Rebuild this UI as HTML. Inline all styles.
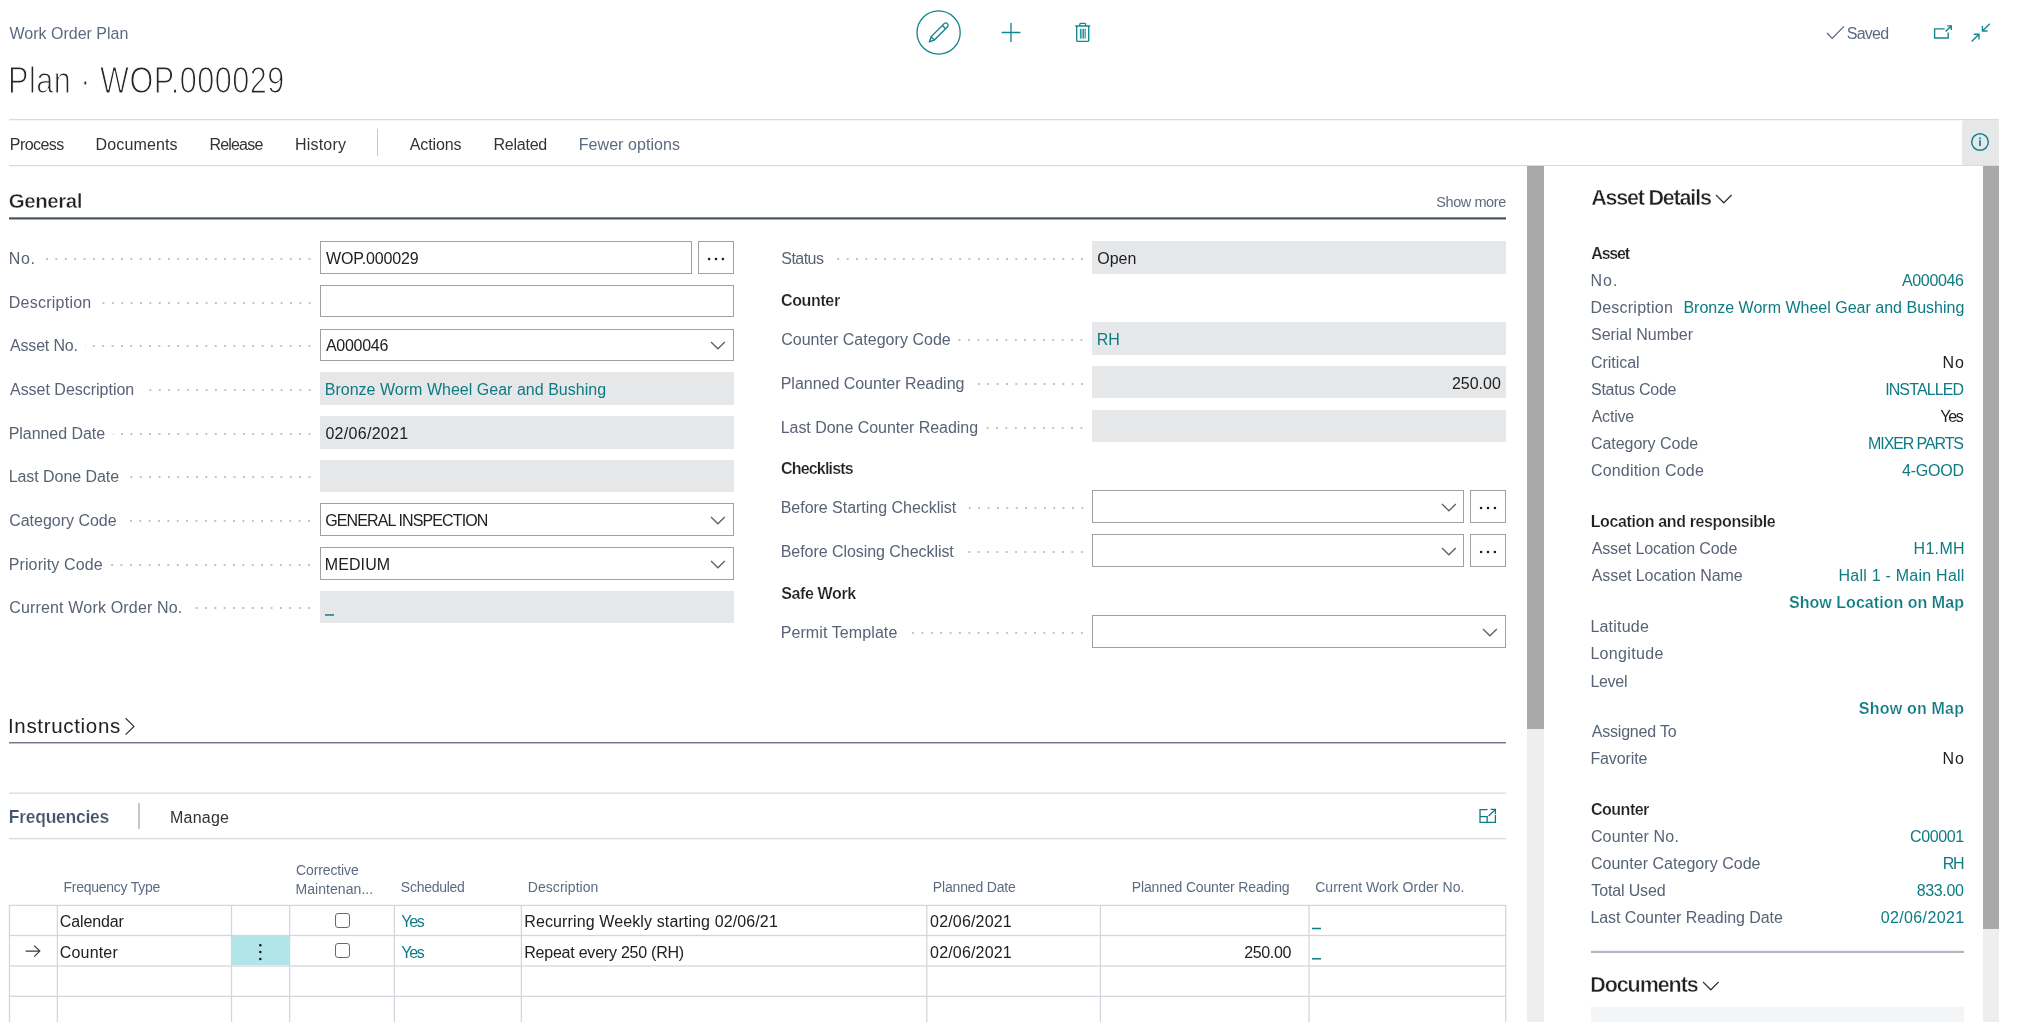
<!DOCTYPE html>
<html><head><meta charset="utf-8"><title>Work Order Plan</title><style>
html,body{margin:0;padding:0;background:#fff}
body{width:2025px;height:1022px;overflow:hidden;position:relative;font-family:"Liberation Sans",sans-serif}
.a{position:absolute}
#tx{position:absolute;left:0;top:0;width:2025px;height:1022px;will-change:transform}
.t{white-space:pre}
.ld{background-image:radial-gradient(circle at center,#bcc2cb 0,#bcc2cb 0.75px,rgba(188,194,203,0) 1.25px);background-size:9.375px 4px;background-position:right center;background-repeat:repeat-x}
</style></head><body>
<div class="a" style="left:9px;top:119px;width:1990px;height:1px;background:#d8dbdf;"></div>
<div class="a" style="left:9px;top:120px;width:1953px;height:1px;background:#f4f5f6;"></div>
<div class="a" style="left:9px;top:165px;width:1990px;height:1px;background:#d8dbdf;"></div>
<div class="a" style="left:9px;top:166px;width:1518px;height:1px;background:#f4f5f6;"></div>
<div class="a" style="left:377px;top:129px;width:1px;height:27px;background:#c3c9d2;"></div>
<div class="a" style="left:1962px;top:120px;width:37px;height:45px;background:#e6e7e9;border-radius:2px;"></div>
<div class="a" style="left:9px;top:217px;width:1497px;height:1px;background:#7e8898;"></div>
<div class="a" style="left:9px;top:218px;width:1497px;height:1px;background:#465065;"></div>
<div class="a" style="left:9px;top:219px;width:1497px;height:1px;background:#a4a9b8;"></div>
<div class="a ld" style="left:41.8px;top:256.85px;width:272.2px;height:4px"></div>
<div class="a" style="left:320px;top:241.2px;width:372px;height:32.6px;background:#fff;border:1px solid #a0a0a0;box-sizing:border-box;"></div>
<div class="a" style="left:698px;top:241.2px;width:36px;height:32.6px;background:#fff;border:1px solid #a0a0a0;box-sizing:border-box;"></div>
<svg class="a" style="left:706.2px;top:255.59999999999997px" width="20" height="6" viewBox="-10 -3 20 6"><circle cx="-6.9" cy="0" r="1.3" fill="#1a1a1a"/><circle cx="0" cy="0" r="1.3" fill="#1a1a1a"/><circle cx="6.9" cy="0" r="1.3" fill="#1a1a1a"/></svg>
<div class="a ld" style="left:98.6px;top:300.85px;width:215.4px;height:4px"></div>
<div class="a" style="left:320px;top:284.88px;width:414px;height:32.6px;background:#fff;border:1px solid #a0a0a0;box-sizing:border-box;"></div>
<div class="a ld" style="left:84.9px;top:343.85px;width:229.1px;height:4px"></div>
<div class="a" style="left:320px;top:328.56px;width:414px;height:32.6px;background:#fff;border:1px solid #a0a0a0;box-sizing:border-box;"></div>
<svg class="a" style="left:710.1px;top:341.46000000000004px" width="15.8" height="8.8" viewBox="-1 -1 15.8 8.8"><path d="M0 0 L6.9 6.8 L13.8 0" fill="none" stroke="#5f5f5f" stroke-width="1.3"/></svg>
<div class="a ld" style="left:141.6px;top:387.85px;width:172.4px;height:4px"></div>
<div class="a" style="left:320px;top:372.24px;width:414px;height:32.6px;background:#e6e7e9;"></div>
<div class="a ld" style="left:112.80887792848335px;top:431.85px;width:201.19112207151665px;height:4px"></div>
<div class="a" style="left:320px;top:415.91999999999996px;width:414px;height:32.6px;background:#e6e7e9;"></div>
<div class="a ld" style="left:126.78339498561448px;top:474.85px;width:187.21660501438552px;height:4px"></div>
<div class="a" style="left:320px;top:459.6px;width:414px;height:32.6px;background:#e6e7e9;"></div>
<div class="a ld" style="left:124.3173037402384px;top:518.8499999999999px;width:189.6826962597616px;height:4px"></div>
<div class="a" style="left:320px;top:503.28px;width:414px;height:32.6px;background:#fff;border:1px solid #a0a0a0;box-sizing:border-box;"></div>
<svg class="a" style="left:710.1px;top:516.18px" width="15.8" height="8.8" viewBox="-1 -1 15.8 8.8"><path d="M0 0 L6.9 6.8 L13.8 0" fill="none" stroke="#5f5f5f" stroke-width="1.3"/></svg>
<div class="a ld" style="left:110.34278668310728px;top:562.8499999999999px;width:203.65721331689272px;height:4px"></div>
<div class="a" style="left:320px;top:546.96px;width:414px;height:32.6px;background:#fff;border:1px solid #a0a0a0;box-sizing:border-box;"></div>
<svg class="a" style="left:710.1px;top:559.86px" width="15.8" height="8.8" viewBox="-1 -1 15.8 8.8"><path d="M0 0 L6.9 6.8 L13.8 0" fill="none" stroke="#5f5f5f" stroke-width="1.3"/></svg>
<div class="a ld" style="left:189.2577065351418px;top:605.8499999999999px;width:124.7422934648582px;height:4px"></div>
<div class="a" style="left:320px;top:590.64px;width:414px;height:32.6px;background:#e6e7e9;"></div>
<div class="a" style="left:325px;top:614px;width:9px;height:1px;background:rgba(13,123,131,0.81);"></div>
<div class="a" style="left:325px;top:615px;width:9px;height:1px;background:rgba(13,123,131,0.69);"></div>
<div class="a ld" style="left:831.8px;top:256.85px;width:254.70000000000005px;height:4px"></div>
<div class="a" style="left:1092px;top:241.0px;width:414px;height:32.6px;background:#e6e7e9;"></div>
<div class="a ld" style="left:958.4px;top:337.85px;width:128.10000000000002px;height:4px"></div>
<div class="a" style="left:1092px;top:322.3px;width:414px;height:32.6px;background:#e6e7e9;"></div>
<div class="a ld" style="left:971.8px;top:381.85px;width:114.70000000000005px;height:4px"></div>
<div class="a" style="left:1092px;top:365.9px;width:414px;height:32.6px;background:#e6e7e9;"></div>
<div class="a ld" style="left:985.4px;top:425.85px;width:101.10000000000002px;height:4px"></div>
<div class="a" style="left:1092px;top:409.5px;width:414px;height:32.6px;background:#e6e7e9;"></div>
<div class="a ld" style="left:964.5px;top:505.84999999999997px;width:122.0px;height:4px"></div>
<div class="a" style="left:1092px;top:490.3px;width:372px;height:32.6px;background:#fff;border:1px solid #a0a0a0;box-sizing:border-box;"></div>
<svg class="a" style="left:1441.1999999999998px;top:503.00000000000006px" width="15.8" height="8.8" viewBox="-1 -1 15.8 8.8"><path d="M0 0 L6.9 6.8 L13.8 0" fill="none" stroke="#5f5f5f" stroke-width="1.3"/></svg>
<div class="a" style="left:1470px;top:490.3px;width:36px;height:32.6px;background:#fff;border:1px solid #a0a0a0;box-sizing:border-box;"></div>
<svg class="a" style="left:1478.2px;top:504.7px" width="20" height="6" viewBox="-10 -3 20 6"><circle cx="-6.9" cy="0" r="1.3" fill="#1a1a1a"/><circle cx="0" cy="0" r="1.3" fill="#1a1a1a"/><circle cx="6.9" cy="0" r="1.3" fill="#1a1a1a"/></svg>
<div class="a ld" style="left:962.1px;top:549.8499999999999px;width:124.39999999999998px;height:4px"></div>
<div class="a" style="left:1092px;top:534.1px;width:372px;height:32.6px;background:#fff;border:1px solid #a0a0a0;box-sizing:border-box;"></div>
<svg class="a" style="left:1441.1999999999998px;top:546.8000000000001px" width="15.8" height="8.8" viewBox="-1 -1 15.8 8.8"><path d="M0 0 L6.9 6.8 L13.8 0" fill="none" stroke="#5f5f5f" stroke-width="1.3"/></svg>
<div class="a" style="left:1470px;top:534.1px;width:36px;height:32.6px;background:#fff;border:1px solid #a0a0a0;box-sizing:border-box;"></div>
<svg class="a" style="left:1478.2px;top:548.5px" width="20" height="6" viewBox="-10 -3 20 6"><circle cx="-6.9" cy="0" r="1.3" fill="#1a1a1a"/><circle cx="0" cy="0" r="1.3" fill="#1a1a1a"/><circle cx="6.9" cy="0" r="1.3" fill="#1a1a1a"/></svg>
<div class="a ld" style="left:905px;top:630.8499999999999px;width:181.5px;height:4px"></div>
<div class="a" style="left:1092px;top:615.4px;width:414px;height:32.6px;background:#fff;border:1px solid #a0a0a0;box-sizing:border-box;"></div>
<svg class="a" style="left:1482.1px;top:628.3px" width="15.8" height="8.8" viewBox="-1 -1 15.8 8.8"><path d="M0 0 L6.9 6.8 L13.8 0" fill="none" stroke="#5f5f5f" stroke-width="1.3"/></svg>
<svg class="a" style="left:124px;top:717px" width="12" height="19" viewBox="0 0 12 19"><path d="M1.6 1.2 L10 9.4 L1.6 17.6" fill="none" stroke="#333" stroke-width="1.2"/></svg>
<div class="a" style="left:9px;top:742px;width:1497px;height:1px;background:#717b8d;"></div>
<div class="a" style="left:9px;top:743px;width:1497px;height:1px;background:#bcc1cb;"></div>
<div class="a" style="left:9px;top:792px;width:1497px;height:1px;background:#ecedf0;"></div>
<div class="a" style="left:9px;top:793px;width:1497px;height:1px;background:#e0e2e6;"></div>
<div class="a" style="left:9px;top:838px;width:1497px;height:1px;background:#d7dade;"></div>
<div class="a" style="left:9px;top:839px;width:1497px;height:1px;background:#f3f4f6;"></div>
<div class="a" style="left:138.3px;top:802.7px;width:1.3px;height:26px;background:#c3c9d2;"></div>
<svg class="a" style="left:1478px;top:807px" width="20" height="18" viewBox="1478 807 20 18" fill="none" stroke="#0d7b83" stroke-width="1.3"><path d="M1487.5 809.6 H1480 V822.4 H1495.4 V815"/><path d="M1480 816.6 H1487.2 V822.4"/><path d="M1488.6 816 L1495.4 809.4 M1490.6 809.4 H1495.4 V814.2"/></svg>
<div class="a" style="left:9px;top:904px;width:1497.2px;height:1px;background:rgba(210,213,219,0.23);"></div>
<div class="a" style="left:9px;top:905px;width:1497.2px;height:1px;background:rgba(210,213,219,1.00);"></div>
<div class="a" style="left:9px;top:934px;width:1497.2px;height:1px;background:rgba(210,213,219,0.12);"></div>
<div class="a" style="left:9px;top:935px;width:1497.2px;height:1px;background:rgba(210,213,219,1.00);"></div>
<div class="a" style="left:9px;top:936px;width:1497.2px;height:1px;background:rgba(210,213,219,0.12);"></div>
<div class="a" style="left:9px;top:965px;width:1497.2px;height:1px;background:rgba(210,213,219,0.62);"></div>
<div class="a" style="left:9px;top:966px;width:1497.2px;height:1px;background:rgba(210,213,219,0.62);"></div>
<div class="a" style="left:9px;top:995px;width:1497.2px;height:1px;background:rgba(210,213,219,0.33);"></div>
<div class="a" style="left:9px;top:996px;width:1497.2px;height:1px;background:rgba(210,213,219,0.92);"></div>
<div class="a" style="left:8px;top:905px;width:1px;height:117px;background:rgba(210,213,219,0.12);"></div>
<div class="a" style="left:9px;top:905px;width:1px;height:117px;background:rgba(210,213,219,1.00);"></div>
<div class="a" style="left:10px;top:905px;width:1px;height:117px;background:rgba(210,213,219,0.12);"></div>
<div class="a" style="left:56px;top:905px;width:1px;height:117px;background:rgba(210,213,219,0.23);"></div>
<div class="a" style="left:57px;top:905px;width:1px;height:117px;background:rgba(210,213,219,1.00);"></div>
<div class="a" style="left:230px;top:905px;width:1px;height:117px;background:rgba(210,213,219,0.12);"></div>
<div class="a" style="left:231px;top:905px;width:1px;height:117px;background:rgba(210,213,219,1.00);"></div>
<div class="a" style="left:232px;top:905px;width:1px;height:117px;background:rgba(210,213,219,0.12);"></div>
<div class="a" style="left:289px;top:905px;width:1px;height:117px;background:rgba(210,213,219,1.00);"></div>
<div class="a" style="left:290px;top:905px;width:1px;height:117px;background:rgba(210,213,219,0.23);"></div>
<div class="a" style="left:393px;top:905px;width:1px;height:117px;background:rgba(210,213,219,0.23);"></div>
<div class="a" style="left:394px;top:905px;width:1px;height:117px;background:rgba(210,213,219,1.00);"></div>
<div class="a" style="left:520px;top:905px;width:1px;height:117px;background:rgba(210,213,219,0.23);"></div>
<div class="a" style="left:521px;top:905px;width:1px;height:117px;background:rgba(210,213,219,1.00);"></div>
<div class="a" style="left:926px;top:905px;width:1px;height:117px;background:rgba(210,213,219,0.83);"></div>
<div class="a" style="left:927px;top:905px;width:1px;height:117px;background:rgba(210,213,219,0.42);"></div>
<div class="a" style="left:1099px;top:905px;width:1px;height:117px;background:rgba(210,213,219,0.22);"></div>
<div class="a" style="left:1100px;top:905px;width:1px;height:117px;background:rgba(210,213,219,1.00);"></div>
<div class="a" style="left:1308px;top:905px;width:1px;height:117px;background:rgba(210,213,219,0.62);"></div>
<div class="a" style="left:1309px;top:905px;width:1px;height:117px;background:rgba(210,213,219,0.62);"></div>
<div class="a" style="left:1505px;top:905px;width:1px;height:117px;background:rgba(210,213,219,0.92);"></div>
<div class="a" style="left:1506px;top:905px;width:1px;height:117px;background:rgba(210,213,219,0.33);"></div>
<div class="a" style="left:232.2px;top:936.3px;width:56.8px;height:29.1px;background:#b1e5ea;"></div>
<svg class="a" style="left:257px;top:942px" width="7" height="20" viewBox="257 942 7 20"><circle cx="260.3" cy="945.2" r="1.25" fill="#1a1a1a"/><circle cx="260.3" cy="952.1" r="1.25" fill="#1a1a1a"/><circle cx="260.3" cy="958.9" r="1.25" fill="#1a1a1a"/></svg>
<div class="a" style="left:1312px;top:927px;width:9px;height:1px;background:rgba(13,123,131,0.25);"></div>
<div class="a" style="left:1312px;top:928px;width:9px;height:1px;background:rgba(13,123,131,1.00);"></div>
<div class="a" style="left:1312px;top:929px;width:9px;height:1px;background:rgba(13,123,131,0.25);"></div>
<div class="a" style="left:1312px;top:958px;width:9px;height:1px;background:rgba(13,123,131,0.95);"></div>
<div class="a" style="left:1312px;top:959px;width:9px;height:1px;background:rgba(13,123,131,0.55);"></div>
<div class="a" style="left:334.8px;top:913.2px;width:15.2px;height:14.8px;background:#fff;border:1px solid #6a6a6a;box-sizing:border-box;border-radius:3px;"></div>
<div class="a" style="left:334.8px;top:943.3px;width:15.2px;height:14.8px;background:#fff;border:1px solid #6a6a6a;box-sizing:border-box;border-radius:3px;"></div>
<svg class="a" style="left:24px;top:943px" width="18" height="16" viewBox="24 943 18 16" fill="none" stroke="#3a3a3a" stroke-width="1.2"><path d="M25.7 951.1 H39.6 M34.2 945.6 L39.8 951.1 L34.2 956.6"/></svg>
<div class="a" style="left:1527.3px;top:165.6px;width:16.5px;height:563.4px;background:#a9a9a9;"></div>
<div class="a" style="left:1527.3px;top:729px;width:16.5px;height:293px;background:#eeeeee;"></div>
<div class="a" style="left:1983.2px;top:165.6px;width:15.9px;height:763px;background:#a9a9a9;"></div>
<div class="a" style="left:1983.2px;top:928.6px;width:15.9px;height:93.39999999999998px;background:#eeeeee;"></div>
<svg class="a" style="left:1715.4px;top:193.79999999999998px" width="17.6" height="9.8" viewBox="-1 -1 17.6 9.8"><path d="M0 0 L7.8 7.8 L15.6 0" fill="none" stroke="#333" stroke-width="1.2"/></svg>
<div class="a" style="left:1590.5px;top:950px;width:373.6px;height:1px;background:#f1f2f4;"></div>
<div class="a" style="left:1590.5px;top:951px;width:373.6px;height:2px;background:#b2b6c0;"></div>
<svg class="a" style="left:1702.2px;top:980.8000000000001px" width="17.6" height="9.8" viewBox="-1 -1 17.6 9.8"><path d="M0 0 L7.8 7.8 L15.6 0" fill="none" stroke="#333" stroke-width="1.2"/></svg>
<div class="a" style="left:1590.5px;top:1006.8px;width:373.6px;height:15.200000000000045px;background:#f4f5f7;"></div>

<svg class="a" style="left:900px;top:0" width="220" height="70" viewBox="900 0 220 70" fill="none" stroke="#14868d" stroke-width="1.35">
<circle cx="938.6" cy="32.5" r="21.6"/>
<path d="M929.5 41.7 L931.0 36.8 L944.3 23.5 A2.35 2.35 0 0 1 947.6 26.8 L934.3 40.1 Z M931.0 36.8 L934.3 40.1 M942.3 25.5 L945.6 28.8"/>
<path d="M1011 23.1 V41.9 M1001.6 32.5 H1020.4"/>
<path d="M1075.2 26 H1090.2 M1079.8 26 V24.3 a1 1 0 0 1 1 -1 h3.8 a1 1 0 0 1 1 1 V26 M1076.7 26 V40.2 a1.2 1.2 0 0 0 1.2 1.2 h9.6 a1.2 1.2 0 0 0 1.2 -1.2 V26"/>
<path d="M1080.4 28.8 V38.6 M1082.0 28.8 V38.6 M1083.6 28.8 V38.6 M1085.2 28.8 V38.6" stroke-width="1"/>
</svg>
<svg class="a" style="left:1820px;top:15px" width="180" height="35" viewBox="1820 15 180 35" fill="none" stroke="#14868d" stroke-width="1.4">
<path d="M1827 33 L1832.2 38.3 L1843.9 26.4" stroke="#56647a" stroke-width="1.2"/>
<path d="M1944.6 28.9 H1934.6 V38.0 H1948.2 V32.6"/>
<path d="M1945.6 31.4 L1951.2 25.9 M1947.2 25.9 H1951.3 V30"/>
<path d="M1989.8 23.8 L1982.4 31 M1982.4 26 V31 H1987.6"/>
<path d="M1971.6 41.6 L1979 34.3 M1973.8 34.3 H1979 V39.6"/>
</svg>
<svg class="a" style="left:1968px;top:130px" width="24" height="24" viewBox="1968 130 24 24" fill="none" stroke="#14868d" stroke-width="1.5">
<circle cx="1980" cy="142" r="8.3"/>
<path d="M1980 140.2 V146 M1980 137.6 V139.2" stroke-width="1.8"/>
</svg>

<div id="tx">
<span class="a t" style="top:22.86px;font-size:16px;line-height:21px;color:#5c6b80;left:9.53px;">Work Order Plan</span>
<span class="a t" style="top:57.45px;font-size:36.5px;line-height:47px;color:#262626;letter-spacing:0.600px;-webkit-text-stroke:1.2px #fff;transform:scaleX(0.8386);transform-origin:0 0;left:7.81px;">Plan · WOP.000029</span>
<span class="a t" style="top:22.76px;font-size:16px;line-height:21px;color:#5c6b80;letter-spacing:-0.779px;left:1846.87px;">Saved</span>
<span class="a t" style="top:134.26px;font-size:16px;line-height:21px;color:#333333;letter-spacing:-0.568px;left:9.79px;">Process</span>
<span class="a t" style="top:134.26px;font-size:16px;line-height:21px;color:#333333;letter-spacing:0.134px;left:95.59px;">Documents</span>
<span class="a t" style="top:134.26px;font-size:16px;line-height:21px;color:#333333;letter-spacing:-0.797px;left:209.39px;">Release</span>
<span class="a t" style="top:134.26px;font-size:16px;line-height:21px;color:#333333;letter-spacing:0.177px;left:295.09px;">History</span>
<span class="a t" style="top:134.26px;font-size:16px;line-height:21px;color:#333333;letter-spacing:-0.093px;left:409.67px;">Actions</span>
<span class="a t" style="top:134.26px;font-size:16px;line-height:21px;color:#333333;letter-spacing:-0.219px;left:493.39px;">Related</span>
<span class="a t" style="top:134.26px;font-size:16px;line-height:21px;color:#5c6b80;letter-spacing:0.074px;left:578.69px;">Fewer options</span>
<span class="a t" style="top:187.20px;font-size:20.5px;line-height:27px;color:#212121;font-weight:700;-webkit-text-stroke:0.45px #fff;letter-spacing:-0.445px;left:8.76px;">General</span>
<span class="a t" style="top:193.38px;font-size:14.5px;line-height:19px;color:#5c6b80;letter-spacing:-0.418px;left:1436.24px;">Show more</span>
<span class="a t" style="top:248.01px;font-size:16px;line-height:21px;color:#586375;letter-spacing:0.634px;left:8.69px;">No.</span>
<span class="a t" style="top:248.01px;font-size:16px;line-height:21px;color:#212121;letter-spacing:-0.129px;left:325.93px;">WOP.000029</span>
<span class="a t" style="top:292.01px;font-size:16px;line-height:21px;color:#586375;letter-spacing:0.252px;left:8.69px;">Description</span>
<span class="a t" style="top:335.01px;font-size:16px;line-height:21px;color:#586375;letter-spacing:-0.171px;left:9.97px;">Asset No.</span>
<span class="a t" style="top:335.01px;font-size:16px;line-height:21px;color:#212121;letter-spacing:-0.288px;left:325.97px;">A000046</span>
<span class="a t" style="top:379.01px;font-size:16px;line-height:21px;color:#586375;letter-spacing:-0.014px;left:9.97px;">Asset Description</span>
<span class="a t" style="top:379.01px;font-size:16px;line-height:21px;color:#0d7b83;letter-spacing:0.021px;left:324.69px;">Bronze Worm Wheel Gear and Bushing</span>
<span class="a t" style="top:423.01px;font-size:16px;line-height:21px;color:#586375;letter-spacing:-0.049px;left:8.69px;">Planned Date</span>
<span class="a t" style="top:423.01px;font-size:16px;line-height:21px;color:#212121;letter-spacing:0.295px;left:325.38px;">02/06/2021</span>
<span class="a t" style="top:466.01px;font-size:16px;line-height:21px;color:#586375;letter-spacing:-0.060px;left:8.69px;">Last Done Date</span>
<span class="a t" style="top:510.01px;font-size:16px;line-height:21px;color:#586375;letter-spacing:-0.015px;left:9.19px;">Category Code</span>
<span class="a t" style="top:510.01px;font-size:16px;line-height:21px;color:#212121;letter-spacing:-0.879px;left:325.20px;">GENERAL INSPECTION</span>
<span class="a t" style="top:554.01px;font-size:16px;line-height:21px;color:#586375;letter-spacing:0.123px;left:8.69px;">Priority Code</span>
<span class="a t" style="top:554.01px;font-size:16px;line-height:21px;color:#212121;letter-spacing:0.113px;left:324.69px;">MEDIUM</span>
<span class="a t" style="top:597.01px;font-size:16px;line-height:21px;color:#586375;letter-spacing:0.171px;left:9.19px;">Current Work Order No.</span>
<span class="a t" style="top:248.01px;font-size:16px;line-height:21px;color:#586375;letter-spacing:-0.531px;left:781.27px;">Status</span>
<span class="a t" style="top:248.01px;font-size:16px;line-height:21px;color:#212121;left:1097.24px;">Open</span>
<span class="a t" style="top:289.96px;font-size:16px;line-height:21px;color:#212121;font-weight:700;-webkit-text-stroke:0.22px #fff;letter-spacing:-0.355px;left:780.94px;">Counter</span>
<span class="a t" style="top:329.01px;font-size:16px;line-height:21px;color:#586375;letter-spacing:0.027px;left:781.19px;">Counter Category Code</span>
<span class="a t" style="top:329.01px;font-size:16px;line-height:21px;color:#0d7b83;left:1096.69px;">RH</span>
<span class="a t" style="top:373.01px;font-size:16px;line-height:21px;color:#586375;letter-spacing:-0.018px;left:780.69px;">Planned Counter Reading</span>
<span class="a t" style="top:373.01px;font-size:16px;line-height:21px;color:#212121;right:524.18px;">250.00</span>
<span class="a t" style="top:417.01px;font-size:16px;line-height:21px;color:#586375;letter-spacing:-0.042px;left:780.69px;">Last Done Counter Reading</span>
<span class="a t" style="top:457.96px;font-size:16px;line-height:21px;color:#212121;font-weight:700;-webkit-text-stroke:0.22px #fff;letter-spacing:-0.804px;left:780.94px;">Checklists</span>
<span class="a t" style="top:497.01px;font-size:16px;line-height:21px;color:#586375;letter-spacing:-0.023px;left:780.69px;">Before Starting Checklist</span>
<span class="a t" style="top:541.01px;font-size:16px;line-height:21px;color:#586375;letter-spacing:-0.051px;left:780.69px;">Before Closing Checklist</span>
<span class="a t" style="top:582.86px;font-size:16px;line-height:21px;color:#212121;font-weight:700;-webkit-text-stroke:0.22px #fff;letter-spacing:-0.363px;left:781.14px;">Safe Work</span>
<span class="a t" style="top:622.01px;font-size:16px;line-height:21px;color:#586375;letter-spacing:0.094px;left:780.69px;">Permit Template</span>
<span class="a t" style="top:711.60px;font-size:20.5px;line-height:27px;color:#212121;letter-spacing:0.673px;left:8.01px;">Instructions</span>
<span class="a t" style="top:806.34px;font-size:17.5px;line-height:23px;color:#44546b;font-weight:700;-webkit-text-stroke:0.22px #fff;letter-spacing:-0.252px;left:8.73px;">Frequencies</span>
<span class="a t" style="top:806.86px;font-size:16px;line-height:21px;color:#333333;letter-spacing:0.239px;left:169.99px;">Manage</span>
<span class="a t" style="top:878.05px;font-size:14px;line-height:18px;color:#5c6b80;letter-spacing:-0.259px;left:63.45px;">Frequency Type</span>
<span class="a t" style="top:861.45px;font-size:14px;line-height:18px;color:#5c6b80;letter-spacing:-0.118px;left:295.99px;">Corrective</span>
<span class="a t" style="top:880.05px;font-size:14px;line-height:18px;color:#5c6b80;letter-spacing:0.051px;left:295.55px;">Maintenan...</span>
<span class="a t" style="top:878.05px;font-size:14px;line-height:18px;color:#5c6b80;letter-spacing:-0.279px;left:400.86px;">Scheduled</span>
<span class="a t" style="top:878.05px;font-size:14px;line-height:18px;color:#5c6b80;letter-spacing:0.063px;left:527.75px;">Description</span>
<span class="a t" style="top:878.05px;font-size:14px;line-height:18px;color:#5c6b80;letter-spacing:-0.170px;left:932.85px;">Planned Date</span>
<span class="a t" style="top:878.05px;font-size:14px;line-height:18px;color:#5c6b80;letter-spacing:-0.153px;left:1131.85px;">Planned Counter Reading</span>
<span class="a t" style="top:878.05px;font-size:14px;line-height:18px;color:#5c6b80;letter-spacing:0.040px;left:1315.19px;">Current Work Order No.</span>
<span class="a t" style="top:911.16px;font-size:16px;line-height:21px;color:#212121;letter-spacing:-0.137px;left:59.79px;">Calendar</span>
<span class="a t" style="top:941.76px;font-size:16px;line-height:21px;color:#212121;letter-spacing:0.176px;left:59.79px;">Counter</span>
<span class="a t" style="top:911.16px;font-size:16px;line-height:21px;color:#0d7b83;letter-spacing:-1.200px;left:401.15px;">Yes</span>
<span class="a t" style="top:911.16px;font-size:16px;line-height:21px;color:#212121;letter-spacing:0.170px;left:930.07px;">02/06/2021</span>
<span class="a t" style="top:941.76px;font-size:16px;line-height:21px;color:#0d7b83;letter-spacing:-1.200px;left:401.15px;">Yes</span>
<span class="a t" style="top:941.76px;font-size:16px;line-height:21px;color:#212121;letter-spacing:0.170px;left:930.07px;">02/06/2021</span>
<span class="a t" style="top:911.16px;font-size:16px;line-height:21px;color:#212121;letter-spacing:0.118px;left:524.29px;">Recurring Weekly starting 02/06/21</span>
<span class="a t" style="top:941.76px;font-size:16px;line-height:21px;color:#212121;letter-spacing:-0.231px;left:524.29px;">Repeat every 250 (RH)</span>
<span class="a t" style="top:941.76px;font-size:16px;line-height:21px;color:#212121;letter-spacing:-0.342px;left:1244.20px;">250.00</span>
<span class="a t" style="top:183.75px;font-size:21.5px;line-height:28px;color:#212121;font-weight:700;-webkit-text-stroke:0.45px #fff;letter-spacing:-1.194px;left:1591.16px;">Asset Details</span>
<span class="a t" style="top:243.26px;font-size:16px;line-height:21px;color:#212121;font-weight:700;-webkit-text-stroke:0.22px #fff;letter-spacing:-1.200px;left:1591.30px;">Asset</span>
<span class="a t" style="top:269.96px;font-size:16px;line-height:21px;color:#586375;letter-spacing:1.034px;left:1590.39px;">No.</span>
<span class="a t" style="top:269.96px;font-size:16px;line-height:21px;color:#0d7b83;letter-spacing:-0.338px;right:61.33px;">A000046</span>
<span class="a t" style="top:297.16px;font-size:16px;line-height:21px;color:#586375;letter-spacing:0.242px;left:1590.39px;">Description</span>
<span class="a t" style="top:297.16px;font-size:16px;line-height:21px;color:#0d7b83;letter-spacing:0.006px;right:60.66px;">Bronze Worm Wheel Gear and Bushing</span>
<span class="a t" style="top:323.96px;font-size:16px;line-height:21px;color:#586375;letter-spacing:-0.014px;left:1590.97px;">Serial Number</span>
<span class="a t" style="top:351.56px;font-size:16px;line-height:21px;color:#586375;letter-spacing:-0.030px;left:1590.89px;">Critical</span>
<span class="a t" style="top:351.56px;font-size:16px;line-height:21px;color:#212121;letter-spacing:0.931px;right:60.10px;">No</span>
<span class="a t" style="top:378.66px;font-size:16px;line-height:21px;color:#586375;letter-spacing:-0.253px;left:1590.97px;">Status Code</span>
<span class="a t" style="top:378.66px;font-size:16px;line-height:21px;color:#0d7b83;letter-spacing:-0.876px;right:61.81px;">INSTALLED</span>
<span class="a t" style="top:405.66px;font-size:16px;line-height:21px;color:#586375;letter-spacing:-0.207px;left:1591.67px;">Active</span>
<span class="a t" style="top:405.66px;font-size:16px;line-height:21px;color:#212121;letter-spacing:-1.200px;right:62.32px;">Yes</span>
<span class="a t" style="top:432.96px;font-size:16px;line-height:21px;color:#586375;letter-spacing:-0.025px;left:1590.89px;">Category Code</span>
<span class="a t" style="top:432.96px;font-size:16px;line-height:21px;color:#0d7b83;letter-spacing:-1.104px;right:62.07px;">MIXER PARTS</span>
<span class="a t" style="top:460.26px;font-size:16px;line-height:21px;color:#586375;letter-spacing:0.202px;left:1590.89px;">Condition Code</span>
<span class="a t" style="top:460.26px;font-size:16px;line-height:21px;color:#0d7b83;letter-spacing:-0.218px;right:61.15px;">4-GOOD</span>
<span class="a t" style="top:510.66px;font-size:16px;line-height:21px;color:#212121;font-weight:700;-webkit-text-stroke:0.22px #fff;letter-spacing:-0.378px;left:1590.63px;">Location and responsible</span>
<span class="a t" style="top:537.66px;font-size:16px;line-height:21px;color:#586375;letter-spacing:-0.112px;left:1591.67px;">Asset Location Code</span>
<span class="a t" style="top:537.66px;font-size:16px;line-height:21px;color:#0d7b83;letter-spacing:0.334px;right:60.06px;">H1.MH</span>
<span class="a t" style="top:564.96px;font-size:16px;line-height:21px;color:#586375;letter-spacing:-0.058px;left:1591.67px;">Asset Location Name</span>
<span class="a t" style="top:564.96px;font-size:16px;line-height:21px;color:#0d7b83;letter-spacing:0.239px;right:60.39px;">Hall 1 - Main Hall</span>
<span class="a t" style="top:592.16px;font-size:16px;line-height:21px;color:#0d7b83;font-weight:700;-webkit-text-stroke:0.22px #fff;letter-spacing:0.042px;right:61.00px;">Show Location on Map</span>
<span class="a t" style="top:615.96px;font-size:16px;line-height:21px;color:#586375;letter-spacing:0.212px;left:1590.39px;">Latitude</span>
<span class="a t" style="top:642.96px;font-size:16px;line-height:21px;color:#586375;letter-spacing:0.328px;left:1590.39px;">Longitude</span>
<span class="a t" style="top:670.66px;font-size:16px;line-height:21px;color:#586375;letter-spacing:-0.292px;left:1590.39px;">Level</span>
<span class="a t" style="top:697.66px;font-size:16px;line-height:21px;color:#0d7b83;font-weight:700;-webkit-text-stroke:0.22px #fff;letter-spacing:0.201px;right:60.84px;">Show on Map</span>
<span class="a t" style="top:721.36px;font-size:16px;line-height:21px;color:#586375;letter-spacing:-0.187px;left:1591.67px;">Assigned To</span>
<span class="a t" style="top:748.06px;font-size:16px;line-height:21px;color:#586375;letter-spacing:-0.096px;left:1590.39px;">Favorite</span>
<span class="a t" style="top:748.06px;font-size:16px;line-height:21px;color:#212121;letter-spacing:0.931px;right:60.10px;">No</span>
<span class="a t" style="top:798.66px;font-size:16px;line-height:21px;color:#212121;font-weight:700;-webkit-text-stroke:0.22px #fff;letter-spacing:-0.505px;left:1591.04px;">Counter</span>
<span class="a t" style="top:825.66px;font-size:16px;line-height:21px;color:#586375;letter-spacing:0.171px;left:1590.89px;">Counter No.</span>
<span class="a t" style="top:825.66px;font-size:16px;line-height:21px;color:#0d7b83;letter-spacing:-0.391px;right:61.31px;">C00001</span>
<span class="a t" style="top:852.96px;font-size:16px;line-height:21px;color:#586375;letter-spacing:0.032px;left:1590.89px;">Counter Category Code</span>
<span class="a t" style="top:852.96px;font-size:16px;line-height:21px;color:#0d7b83;letter-spacing:-1.192px;right:61.59px;">RH</span>
<span class="a t" style="top:879.96px;font-size:16px;line-height:21px;color:#586375;letter-spacing:-0.145px;left:1591.34px;">Total Used</span>
<span class="a t" style="top:879.96px;font-size:16px;line-height:21px;color:#0d7b83;letter-spacing:-0.343px;right:61.42px;">833.00</span>
<span class="a t" style="top:907.36px;font-size:16px;line-height:21px;color:#586375;letter-spacing:-0.058px;left:1590.39px;">Last Counter Reading Date</span>
<span class="a t" style="top:907.36px;font-size:16px;line-height:21px;color:#0d7b83;letter-spacing:0.359px;right:60.56px;">02/06/2021</span>
<span class="a t" style="top:970.55px;font-size:21.5px;line-height:28px;color:#212121;font-weight:700;-webkit-text-stroke:0.45px #fff;letter-spacing:-1.082px;left:1590.26px;">Documents</span>
</div>
</body></html>
